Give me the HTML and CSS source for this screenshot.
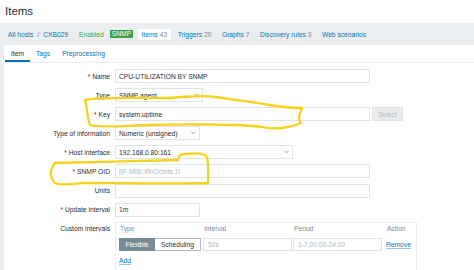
FILE: index.html
```html
<!DOCTYPE html>
<html lang="en">
<head>
<meta charset="utf-8">
<title>Items</title>
<link rel="stylesheet" href="styles.css">
</head>
<body>
<header class="page-header"><h1 class="page-title">Items</h1></header>
<nav class="host-nav">
  <div class="breadcrumbs"><a class="link">All hosts</a><span class="sep">/</span><a class="link">CXB029</a></div>
  <span class="status-enabled">Enabled</span>
  <span class="badge">SNMP</span>
  <ul class="host-tabs">
    <li class="host-tab selected"><a class="link">Items</a> <span class="count">43</span></li>
    <li class="host-tab"><a class="link">Triggers</a> <span class="count">20</span></li>
    <li class="host-tab"><a class="link">Graphs</a> <span class="count">7</span></li>
    <li class="host-tab"><a class="link">Discovery rules</a> <span class="count">3</span></li>
    <li class="host-tab"><a class="link">Web scenarios</a></li>
  </ul>
</nav>
<main class="page-body">
  <section class="panel">
    <ul class="tabs">
      <li class="tab active">Item</li>
      <li class="tab"><a class="link">Tags</a></li>
      <li class="tab"><a class="link">Preprocessing</a></li>
    </ul>
    <form class="form">
      <label class="form-label"><span class="req">*</span> Name</label>
      <div class="field"><input class="input w-wide" value="CPU-UTILIZATION BY SNMP"></div>

      <label class="form-label">Type</label>
      <div class="field"><div class="select w-type"><span>SNMP agent</span><svg class="chev" viewBox="0 0 6 4"><path d="M0.5 0.5 L3 3 L5.5 0.5"/></svg></div></div>

      <label class="form-label"><span class="req">*</span> Key</label>
      <div class="field"><input class="input w-wide" value="system.uptime"><button type="button" class="btn-disabled">Select</button></div>

      <label class="form-label">Type of information</label>
      <div class="field"><div class="select w-info"><span>Numeric (unsigned)</span><svg class="chev" viewBox="0 0 6 4"><path d="M0.5 0.5 L3 3 L5.5 0.5"/></svg></div></div>

      <label class="form-label"><span class="req">*</span> Host interface</label>
      <div class="field"><div class="select w-host"><span>192.168.0.80:161</span><svg class="chev" viewBox="0 0 6 4"><path d="M0.5 0.5 L3 3 L5.5 0.5"/></svg></div></div>

      <label class="form-label"><span class="req">*</span> SNMP OID</label>
      <div class="field"><input class="input w-wide" placeholder="[IF-MIB::ifInOctets.1]"></div>

      <label class="form-label">Units</label>
      <div class="field"><input class="input w-wide"></div>

      <label class="form-label"><span class="req">*</span> Update interval</label>
      <div class="field"><input class="input w-short" value="1m"></div>

      <label class="form-label label-top">Custom intervals</label>
      <div class="field">
        <div class="intervals">
          <div class="iv-head">Type</div>
          <div class="iv-head">Interval</div>
          <div class="iv-head">Period</div>
          <div class="iv-head">Action</div>
          <div class="segmented"><span class="seg on">Flexible</span><span class="seg">Scheduling</span></div>
          <div><input class="input iv-input" placeholder="50s"></div>
          <div><input class="input iv-input" placeholder="1-7,00:00-24:00"></div>
          <div><a class="link dotted">Remove</a></div>
          <div class="iv-add"><a class="link dotted">Add</a></div>
        </div>
      </div>
    </form>
  </section>
</main>
<svg class="annotations" width="474" height="270" viewBox="0 0 474 270">
  <path d="M85,100 C100,97 130,98 160,98 C185,98 200,94 215,97 C235,100 255,102 270,105 C285,108 295,108 302,108 C300,113 297,118 301,123 C290,128 275,130 262,127 C240,124 180,124 150,125 C120,126 100,128 90,125 C87,118 88,110 85,100"/>
  <path d="M55,163 C90,162 140,161 178,160 C178,157 180,154 185,154 C195,153 205,153 207,157 C209,165 208,175 208,183 C180,184 120,183 83,183 C72,184 62,186 55,183 C50,178 49,170 55,163"/>
</svg>
</body>
</html>
```

FILE: styles.css
```css
* { box-sizing: border-box; margin: 0; padding: 0; }
html, body { width: 474px; height: 270px; overflow: hidden; }
body {
  font-family: "Liberation Sans", Arial, sans-serif;
  font-size: 6.7px;
  color: #1f2c33;
  background: #fff;
  position: relative;
}
.link { color: #0275b8; text-decoration: none; }

.page-header { height: 23px; padding: 4px 0 0 5px; }
.page-title { font-size: 11.5px; font-weight: normal; line-height: 14px; color: #1f2c33; }

.host-nav {
  height: 22px;
  background: #ebeef0;
  display: flex;
  align-items: center;
  padding-left: 8px;
  white-space: nowrap;
}
.breadcrumbs { display: flex; }
.sep { margin: 0 4px; color: #768d99; }
.status-enabled { margin-left: 11px; color: #429e47; }
.badge {
  margin-left: 6.4px;
  background: #3aa04c;
  color: #fff;
  padding: 0 1.8px;
  line-height: 8px;
  height: 8px;
}
.host-tabs { list-style: none; display: flex; gap: 3.4px; margin-left: 5px; }
.host-tab { padding: 0 3.6px; height: 11px; line-height: 11px; }
.host-tab.selected { background: #fff; }
.count { color: #768d99; }

.page-body { background: #ebeef0; padding-left: 4px; height: 225px; }
.panel { background: #fff; height: 100%; }

.tabs {
  list-style: none;
  display: flex;
  height: 18px;
  border-bottom: 1px solid #ebeef0;
  padding-left: 1px;
}
.tab { padding: 0 6px; line-height: 17px; height: 17px; }
.tab.active { box-shadow: inset 0 -2px 0 #0275b8; color: #1f2c33; }

.form {
  display: grid;
  grid-template-columns: 106px auto;
  column-gap: 5px;
  row-gap: 5.1px;
  align-items: center;
  padding-top: 6px;
}
.form-label { text-align: right; color: #1f2c33; white-space: nowrap; }
.label-top { align-self: start; line-height: 12px; padding-top: 1px; }
.req { color: #d40000; }
.field { display: flex; align-items: center; height: 14px; }
.field:last-child { height: auto; align-items: flex-start; }

.input, .select {
  height: 14px;
  border: 1px solid #dfe4e7;
  background: #fff;
  font: inherit;
  color: #1f2c33;
  padding: 0 3px;
  outline: none;
}
.input::placeholder { color: #acbbc2; }
.w-wide { width: 255px; }
.w-type { width: 88px; }
.w-info { width: 85px; }
.w-host { width: 178px; }
.w-short { width: 85px; }

.select {
  display: flex;
  align-items: center;
  justify-content: space-between;
  padding-right: 3px;
}
.chev { width: 5px; height: 4px; fill: none; stroke: #768d99; stroke-width: 1; }

.btn-disabled {
  margin-left: 2px;
  width: 31px;
  height: 14px;
  border: 1px solid #dfe4e7;
  background: #ebebeb;
  color: #acbbc2;
  font: inherit;
}

.intervals {
  width: 302px;
  border: 1px solid #ebeef0;
  border-bottom: none;
  padding: 0 4px 10px 3px;
  display: grid;
  grid-template-columns: 84px 90px 93px auto;
  align-items: center;
}
.iv-head { line-height: 12px; color: #768d99; margin-bottom: 3px; padding-left: 1px; }
.iv-head:nth-child(2), .iv-head:nth-child(3) { padding-left: 1px; }
.segmented { display: flex; height: 13px; }
.seg {
  height: 13px;
  line-height: 11px;
  border: 1px solid #acbbc2;
  padding: 0 4.5px;
  color: #1f2c33;
  background: #fff;
}
.seg.on { background: #768d99; border-color: #768d99; color: #fff; width: 36px; text-align: center; padding: 0; }
.seg:not(.on) { width: 46px; text-align: center; padding: 0; border-left: none; }
.iv-input { width: 89px; height: 13px; padding: 0 4px; }
.dotted { border-bottom: 1px solid #9cc4e0; }
.iv-add { grid-column: 1 / -1; margin-top: 4px; line-height: 12px; }

.annotations {
  position: absolute;
  top: 0;
  left: 0;
  pointer-events: none;
  fill: none;
  stroke: #f6d21a;
  stroke-width: 2.3;
  stroke-linecap: round;
  stroke-linejoin: round;
}
```
